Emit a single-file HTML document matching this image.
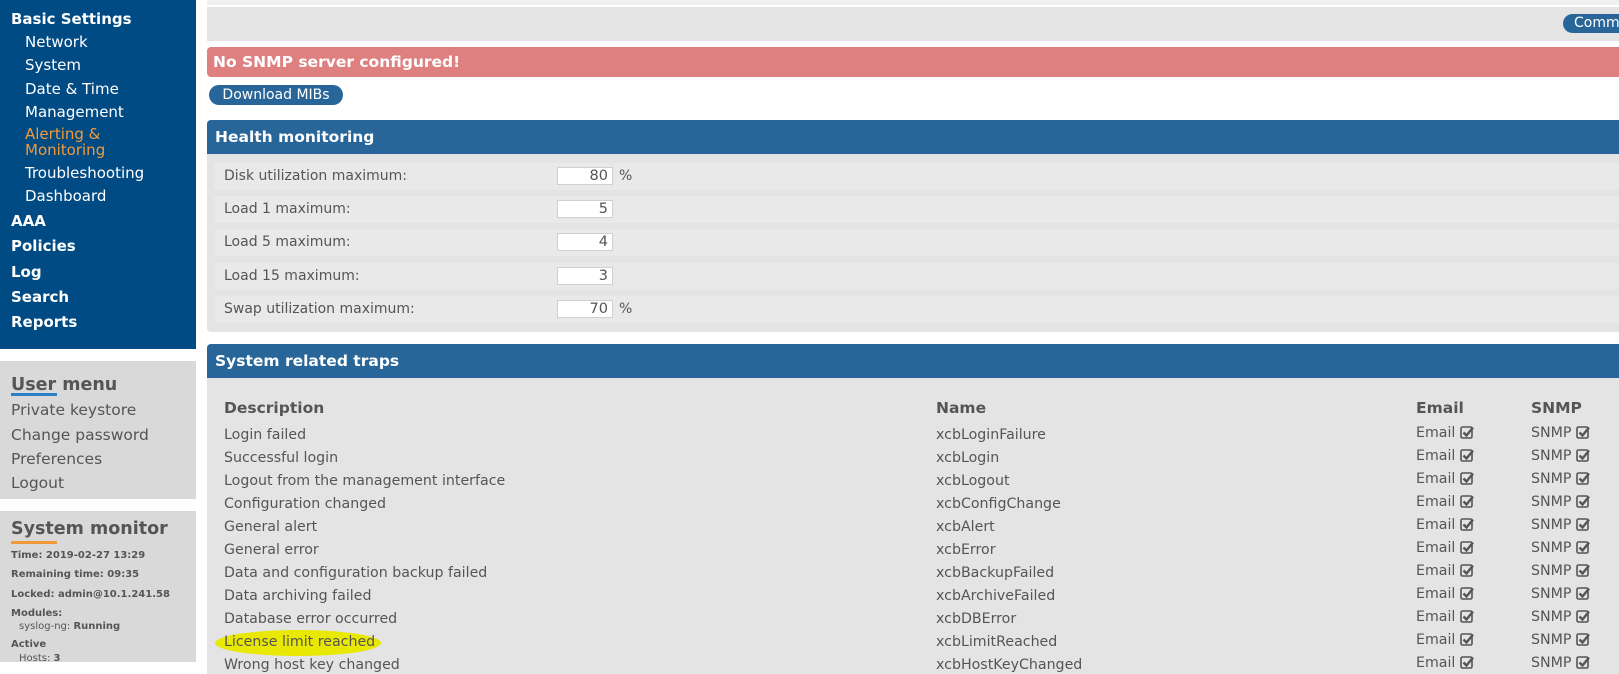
<!DOCTYPE html>
<html><head><style>
*{margin:0;padding:0;box-sizing:border-box}
body{width:1619px;height:662px;overflow:hidden;background:#fff;font-family:"DejaVu Sans","Liberation Sans",sans-serif;color:#555;position:relative}
.a{position:absolute;white-space:nowrap}
#side{position:absolute;left:0;top:0;width:196px;height:349px;background:#004b84}
.nb{position:absolute;left:11px;color:#fff;font-weight:bold;font-size:15px;transform:translateY(-50%)}
.ns{position:absolute;left:25px;color:#fff;font-size:15px;transform:translateY(-50%)}
.box{position:absolute;left:0;width:196px;background:#d9d9d9}
.hd{position:absolute;left:207px;right:0;background:#286699;color:#fff;font-weight:bold;font-size:15.5px;padding-left:8px}
.row{position:absolute;left:214px;right:0;height:27px;background:#e9e9e9;border-radius:3px}
.lbl{position:absolute;left:10px;top:5px;font-size:14px;color:#555}
.inp{position:absolute;left:343px;top:4px;width:56px;height:18px;background:#fff;border:1px solid #d0d0d0;font-size:14.5px;text-align:right;padding-right:4px;line-height:16px}
.pct{position:absolute;left:405px;top:5px;font-size:14px}
.t{position:absolute;font-size:14.2px;color:#555;transform:translateY(-50%);white-space:nowrap}
.cb{display:inline-block;vertical-align:-2px;margin-left:5px}
</style></head><body>
<div id="side">
<div class="nb" style="top:19px">Basic Settings</div>
<div class="ns" style="top:42px">Network</div>
<div class="ns" style="top:65px">System</div>
<div class="ns" style="top:89px">Date &amp; Time</div>
<div class="ns" style="top:112px">Management</div>
<div class="ns" style="top:142px;color:#f29a3a;line-height:16px">Alerting &amp;<br>Monitoring</div>
<div class="ns" style="top:173px">Troubleshooting</div>
<div class="ns" style="top:196px">Dashboard</div>
<div class="nb" style="top:221px">AAA</div>
<div class="nb" style="top:246px">Policies</div>
<div class="nb" style="top:272px">Log</div>
<div class="nb" style="top:297px">Search</div>
<div class="nb" style="top:322px">Reports</div>
</div>
<div class="box" style="top:361px;height:138px">
<div class="a" style="left:11px;top:14px;font-size:17.5px;font-weight:bold;color:#555">User menu</div>
<div class="a" style="left:11px;top:32px;width:46px;height:3px;background:#2d7fc7"></div>
<div class="t" style="left:11px;top:49px;font-size:15.5px">Private keystore</div>
<div class="t" style="left:11px;top:74px;font-size:15.5px">Change password</div>
<div class="t" style="left:11px;top:98px;font-size:15.5px">Preferences</div>
<div class="t" style="left:11px;top:122px;font-size:15.5px">Logout</div>
</div>
<div class="box" style="top:511px;height:151px;font-size:10px;font-weight:bold;color:#555">
<div class="a" style="left:11px;top:8px;font-size:17.5px">System monitor</div>
<div class="a" style="left:11px;top:30px;width:46px;height:3px;background:#f29a3a"></div>
<div class="a" style="left:11px;top:39px">Time: 2019-02-27 13:29</div>
<div class="a" style="left:11px;top:58px">Remaining time: 09:35</div>
<div class="a" style="left:11px;top:78px">Locked: admin@10.1.241.58</div>
<div class="a" style="left:11px;top:97px">Modules:</div>
<div class="a" style="left:19px;top:110px;font-weight:normal">syslog-ng: <b>Running</b></div>
<div class="a" style="left:11px;top:128px">Active</div>
<div class="a" style="left:19px;top:142px;font-weight:normal">Hosts: <b>3</b></div>
</div>

<div class="a" style="left:207px;top:0;right:0;height:5px;background:#f0f0f0"></div>
<div class="a" style="left:207px;top:7px;right:0;height:34px;background:#e4e4e4"></div>
<div class="a" style="left:1563px;top:14px;width:70px;height:19px;background:#286699;border-radius:10px;color:#fff;font-size:14px;padding-left:11px;line-height:19px">Comm</div>
<div class="a" style="left:207px;top:47px;right:0;height:30px;background:#de8080;border-radius:4px 0 0 4px;color:#fff;font-weight:bold;font-size:15.5px;padding-left:6px;line-height:30px">No SNMP server configured!</div>
<div class="a" style="left:209px;top:85px;width:134px;height:20px;background:#286699;border-radius:10px;color:#fff;font-size:14px;text-align:center;line-height:20px">Download MIBs</div>

<div class="a" style="left:207px;top:120px;right:0;height:212px;background:#e4e4e4;border-radius:4px 0 0 4px"></div>
<div class="hd" style="top:120px;height:34px;line-height:34px;border-radius:4px 0 0 0">Health monitoring</div>
<div class="row" style="top:163px"><div class="lbl">Disk utilization maximum:</div><div class="inp">80</div><div class="pct">%</div></div>
<div class="row" style="top:196px"><div class="lbl">Load 1 maximum:</div><div class="inp">5</div></div>
<div class="row" style="top:229px"><div class="lbl">Load 5 maximum:</div><div class="inp">4</div></div>
<div class="row" style="top:263px"><div class="lbl">Load 15 maximum:</div><div class="inp">3</div></div>
<div class="row" style="top:296px"><div class="lbl">Swap utilization maximum:</div><div class="inp">70</div><div class="pct">%</div></div>

<div class="a" style="left:207px;top:344px;right:0;height:330px;background:#e4e4e4;border-radius:4px 0 0 0"></div>
<div class="hd" style="top:344px;height:34px;line-height:34px;border-radius:4px 0 0 0">System related traps</div>
<svg class="a" style="left:214px;top:629px" width="170" height="28"><ellipse cx="84" cy="14" rx="83" ry="13" fill="#e8e800"/></svg>
<div class="t" style="left:224px;top:408px;font-weight:bold;font-size:15.5px">Description</div>
<div class="t" style="left:936px;top:408px;font-weight:bold;font-size:15.5px">Name</div>
<div class="t" style="left:1416px;top:408px;font-weight:bold;font-size:15.5px">Email</div>
<div class="t" style="left:1531px;top:408px;font-weight:bold;font-size:15.5px">SNMP</div>
<div id="rows"></div>
<script>
var d=[["Login failed","xcbLoginFailure"],["Successful login","xcbLogin"],["Logout from the management interface","xcbLogout"],["Configuration changed","xcbConfigChange"],["General alert","xcbAlert"],["General error","xcbError"],["Data and configuration backup failed","xcbBackupFailed"],["Data archiving failed","xcbArchiveFailed"],["Database error occurred","xcbDBError"],["License limit reached","xcbLimitReached"],["Wrong host key changed","xcbHostKeyChanged"]];
var cb='<svg class="cb" width="14" height="14" viewBox="0 0 14 14"><rect x="1" y="2" width="11" height="11" rx="1.5" fill="none" stroke="#555" stroke-width="1.6"/><path d="M3.5 7.5l3 3L13 2.5" fill="none" stroke="#555" stroke-width="2.4"/></svg>';
var h='';for(var i=0;i<d.length;i++){var y=435+i*23;
h+='<div class="t" style="left:224px;top:'+y+'px">'+d[i][0]+'</div><div class="t" style="left:936px;top:'+y+'px">'+d[i][1]+'</div><div class="t" style="left:1416px;top:'+(y-2)+'px">Email'+cb+'</div><div class="t" style="left:1531px;top:'+(y-2)+'px">SNMP'+cb+'</div>';}
document.getElementById('rows').innerHTML=h;
</script>
</body></html>
